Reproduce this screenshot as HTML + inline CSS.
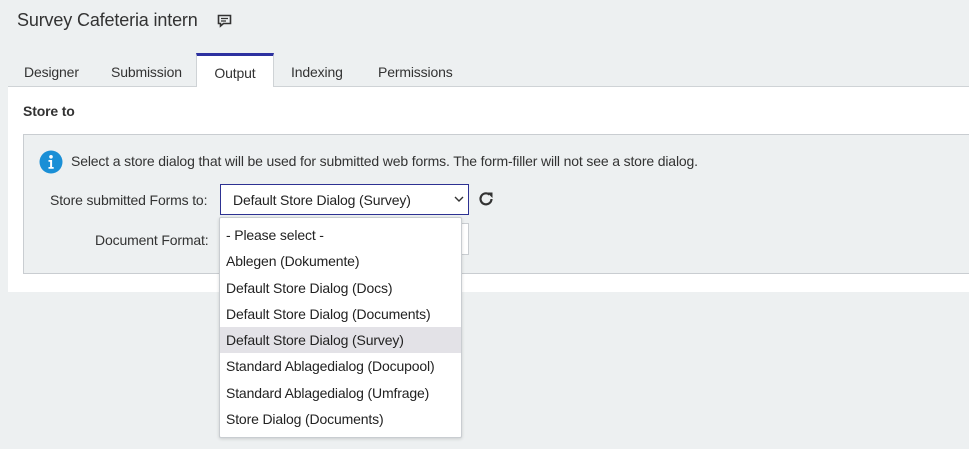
<!DOCTYPE html>
<html><head><style>
body{margin:0;width:969px;height:449px;background:#edf0f1;font-family:"Liberation Sans",sans-serif;color:#333;position:relative;overflow:hidden;font-size:14px;letter-spacing:-0.15px}
.abs{position:absolute}
.title{left:17px;top:10px;font-size:18px;color:#333}
.tab{top:53px;height:33px;line-height:38px;font-size:14px;color:#333}
.panel{left:8px;top:86px;width:961px;height:205px;background:#fff;border-top:1px solid #cfd3d6}
.box{left:23px;top:134px;width:946px;height:138px;background:#edf0f1;border:1px solid #c9cdd1;border-right:none}
.sel{left:220px;top:184px;width:249px;height:31px;border:1px solid #2d3192;background:#fff;box-sizing:border-box}
.dd{left:219px;top:217px;width:241px;height:219px;background:#fff;border:1px solid #c9cdd1;border-radius:2px;box-shadow:0 1px 3px rgba(0,0,0,.15)}
.it{height:26.3px;line-height:26px;padding-left:6px;font-size:14px;color:#222}
</style></head><body>
<div class="abs title">Survey Cafeteria intern</div>
<svg class="abs" style="left:217px;top:14px" width="16" height="14" viewBox="0 0 16 14"><path d="M1.5 1.5h12v8h-7l-3 2.5v-2.5h-2z" fill="none" stroke="#333" stroke-width="1.6"/><path d="M4 4.5h7M4 7h5" stroke="#333" stroke-width="1.3"/></svg>
<div class="abs tab" style="left:24px">Designer</div>
<div class="abs tab" style="left:111px">Submission</div>
<div class="abs" style="left:196px;top:53px;width:78px;height:34px;background:#fff;border-top:3px solid #2d31a0;border-left:1px solid #cfd3d6;border-right:1px solid #cfd3d6;box-sizing:border-box;text-align:center;line-height:34px;z-index:2">Output</div>
<div class="abs tab" style="left:291px">Indexing</div>
<div class="abs tab" style="left:378px">Permissions</div>
<div class="abs panel"></div>
<div class="abs" style="left:23px;top:103px;font-weight:bold">Store to</div>
<div class="abs box"></div>
<svg class="abs" style="left:39px;top:150px" width="24" height="24" viewBox="0 0 24 24"><circle cx="12" cy="12" r="11.5" fill="#1a8fd6"/><circle cx="12" cy="6.8" r="1.8" fill="#fff"/><path d="M9.5 10h3.6v7h1.6v1.8H9.5V17h1.6v-5.2H9.5z" fill="#fff"/></svg>
<div class="abs" style="left:71px;top:153px">Select a store dialog that will be used for submitted web forms. The form-filler will not see a store dialog.</div>
<div class="abs" style="left:50px;top:192px">Store submitted Forms to:</div>
<div class="abs" style="left:95px;top:232px">Document Format:</div>
<div class="abs" style="left:220px;top:223px;width:249px;height:32px;border:1px solid #c9cdd1;background:#fff;box-sizing:border-box"></div>
<div class="abs sel"></div>
<div class="abs" style="left:233px;top:192px;color:#222">Default Store Dialog (Survey)</div>
<svg class="abs" style="left:454px;top:195px" width="10" height="8"><path d="M1 2l4 4 4-4" fill="none" stroke="#333" stroke-width="1.4"/></svg>
<svg class="abs" style="left:477px;top:190px" width="18" height="18" viewBox="0 0 18 18"><path d="M14.5 9A5.5 5.5 0 1 1 12.5 4.6" fill="none" stroke="#333" stroke-width="2.2"/><path d="M10 2.5h5.5V8z" fill="#333"/></svg>
<div class="abs dd">
<div style="height:4px"></div>
<div class="it">- Please select -</div>
<div class="it">Ablegen (Dokumente)</div>
<div class="it">Default Store Dialog (Docs)</div>
<div class="it">Default Store Dialog (Documents)</div>
<div class="it" style="background:#e3e2e7">Default Store Dialog (Survey)</div>
<div class="it">Standard Ablagedialog (Docupool)</div>
<div class="it">Standard Ablagedialog (Umfrage)</div>
<div class="it">Store Dialog (Documents)</div>
</div>
</body></html>
